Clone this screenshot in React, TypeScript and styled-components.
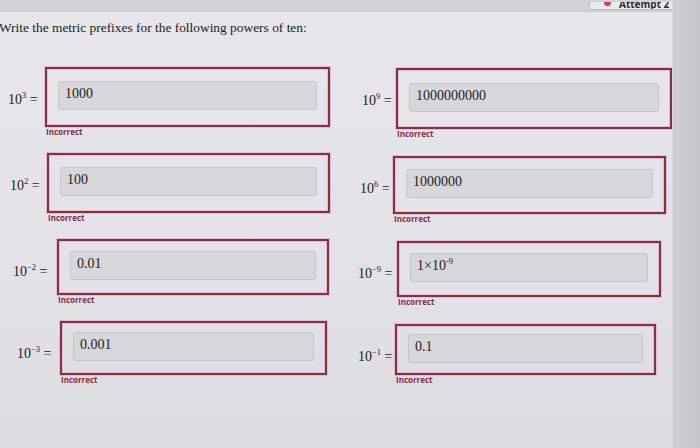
import React from "react";
import styled, { createGlobalStyle } from "styled-components";

interface Answer {
  power: string;
  value: string;
  valuePower?: string;
  // the photo is taken at a slight angle, so each row sits a little differently
  shift: number;
  labelWidth: number;
  trim: number;
  height: number;
}

const leftAnswers: Answer[] = [
  { power: "3", value: "1000", shift: 0, labelWidth: 37, trim: 0, height: 60 },
  { power: "2", value: "100", shift: 2, labelWidth: 37, trim: 0, height: 60 },
  { power: "\u22122", value: "0.01", shift: 5, labelWidth: 44, trim: 1, height: 56 },
  { power: "\u22123", value: "0.001", shift: 9, labelWidth: 43, trim: 3, height: 54 }
];

const rightAnswers: Answer[] = [
  { power: "9", value: "1000000000", shift: 4, labelWidth: 34, trim: 0, height: 61 },
  { power: "6", value: "1000000", shift: 2, labelWidth: 33, trim: 6, height: 58 },
  {
    power: "\u22129",
    value: "1×10",
    valuePower: "-9",
    shift: 0,
    labelWidth: 39,
    trim: 11,
    height: 56
  },
  { power: "\u22121", value: "0.1", shift: 0, labelWidth: 37, trim: 16, height: 51 }
];

const AnswerRow: React.FC<{ answer: Answer }> = ({ answer }) => (
  <Row shift={answer.shift} trim={answer.trim}>
    <Power width={answer.labelWidth}>
      10<Sup>{answer.power}</Sup>&nbsp;=
    </Power>
    <BoxColumn>
      <AnswerBox height={answer.height}>
        <Field>
          {answer.value}
          {answer.valuePower && <Sup>{answer.valuePower}</Sup>}
        </Field>
      </AnswerBox>
      <Feedback>Incorrect</Feedback>
    </BoxColumn>
  </Row>
);

export default function App() {
  return (
    <>
      <GlobalStyle />
      <Screen>
        <Sheet>
          <TopBar>
            <Tab>
              <TabDot />
              Attempt 2
            </Tab>
          </TopBar>
          <Heading>Write the metric prefixes for the following powers of ten:</Heading>
          <Columns>
            <Column offset={0}>
              {leftAnswers.map((a, i) => (
                <AnswerRow key={i} answer={a} />
              ))}
            </Column>
            <Column offset={1}>
              {rightAnswers.map((a, i) => (
                <AnswerRow key={i} answer={a} />
              ))}
            </Column>
          </Columns>
        </Sheet>
        <Edge />
      </Screen>
    </>
  );
}

const GlobalStyle = createGlobalStyle`
  html, body {
    margin: 0;
    padding: 0;
    background: #e3e3e8;
  }
  * {
    box-sizing: border-box;
  }
`;

const Screen = styled.div`
  display: flex;
  width: 700px;
  height: 448px;
  overflow: hidden;
`;

const Sheet = styled.div`
  flex: 1;
  display: flex;
  flex-direction: column;
  background: linear-gradient(180deg, #e6e6eb 0%, #e2e2e7 60%, #dcdce0 100%);
`;

const Edge = styled.div`
  width: 32px;
  background: linear-gradient(90deg, #d0d0d4 0%, #c5c5c9 100%);
  border-left: 1px solid #d9d9dd;
`;

const TopBar = styled.div`
  height: 12px;
  display: flex;
  justify-content: flex-end;
  align-items: flex-end;
  background: #d3d3d7;
  border-bottom: 1px solid #cacace;
  margin-right: -32px;
`;

const Tab = styled.div`
  width: 105px;
  height: 8px;
  margin-right: 10px;
  margin-bottom: 1px;
  display: flex;
  align-items: flex-end;
  gap: 8px;
  padding-left: 14px;
  background: #ebebee;
  border: 1px solid #b8b8bd;
  border-top: none;
  font-family: "Open Sans", sans-serif;
  font-weight: 700;
  font-size: 10px;
  line-height: 10px;
  color: #2a2a2e;
  overflow: hidden;
`;

const TabDot = styled.span`
  width: 7px;
  height: 7px;
  margin-bottom: 3px;
  border-radius: 50%;
  background: #c8405a;
  flex-shrink: 0;
`;

const Heading = styled.h1`
  margin: 8px 0 0 -1px;
  font-family: "Liberation Serif", serif;
  font-weight: normal;
  font-size: 13.4px;
  line-height: 16px;
  color: #1c1c1e;
`;

const Columns = styled.div`
  display: grid;
  grid-template-columns: 322px 314px;
  column-gap: 28px;
  padding-left: 8px;
  margin-top: 31px;
`;

const Column = styled.div<{ offset: number }>`
  display: flex;
  flex-direction: column;
  gap: ${(p) => p.offset}px;
  padding-top: ${(p) => p.offset}px;
`;

const Row = styled.div<{ shift: number; trim: number }>`
  display: flex;
  align-items: flex-start;
  margin-left: ${(p) => p.shift}px;
  margin-right: ${(p) => p.trim}px;
`;

const Power = styled.div<{ width: number }>`
  width: ${(p) => p.width}px;
  flex-shrink: 0;
  padding-top: 25px;
  font-family: "Liberation Serif", serif;
  font-size: 14px;
  color: #222;
  white-space: nowrap;
`;

const Sup = styled.sup`
  font-size: 8.5px;
  vertical-align: 6px;
  line-height: 0;
`;

const BoxColumn = styled.div`
  flex: 1;
  display: flex;
  flex-direction: column;
`;

const AnswerBox = styled.div<{ height: number }>`
  height: ${(p) => p.height}px;
  display: flex;
  flex-direction: column;
  justify-content: center;
  padding: 0 11px 3px 11px;
  border: 2px solid #843046;
  box-shadow: 0 0 0 1px rgba(232, 160, 178, 0.55),
    inset 0 0 0 1px rgba(232, 160, 178, 0.55);
`;

const Field = styled.div`
  height: 29px;
  padding: 3px 6px 0;
  background: #d6d6db;
  border: 1px solid #c5c5cb;
  border-radius: 3px;
  font-family: "Liberation Serif", serif;
  font-size: 14px;
  line-height: 17px;
  color: #1e1e20;
`;

const Feedback = styled.div`
  margin: 0 0 0 1px;
  height: 26px;
  font-family: "Open Sans", sans-serif;
  font-weight: 700;
  font-size: 8px;
  line-height: 10px;
  color: #8a2c45;
`;
